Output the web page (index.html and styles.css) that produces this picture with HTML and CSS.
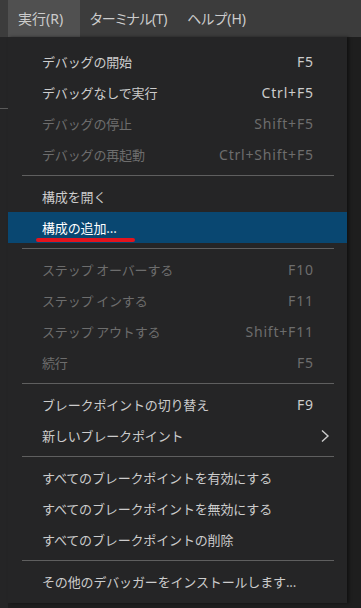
FILE: index.html
```html
<!DOCTYPE html>
<html lang="ja">
<head>
<meta charset="utf-8">
<link rel="stylesheet" href="styles.css">
</head>
<body>
<div class="app">
  <div class="menubar">
    <div class="mb-item active">実行(R)</div>
    <div class="mb-item tight">ターミナル(T)</div>
    <div class="mb-item">ヘルプ(H)</div>
  </div>
  <div class="main">
    <div class="gutter"><div class="gutter-line"></div></div>
    <div class="menu">
      <div class="item"><span class="label">デバッグの開始</span><span class="key">F5</span></div>
      <div class="item"><span class="label">デバッグなしで実行</span><span class="key">Ctrl+F5</span></div>
      <div class="item disabled"><span class="label">デバッグの停止</span><span class="key">Shift+F5</span></div>
      <div class="item disabled"><span class="label">デバッグの再起動</span><span class="key">Ctrl+Shift+F5</span></div>
      <div class="sep"></div>
      <div class="item"><span class="label">構成を開く</span></div>
      <div class="item selected"><span class="label">構成の追加...</span><span class="mark"></span></div>
      <div class="sep"></div>
      <div class="item disabled"><span class="label">ステップ オーバーする</span><span class="key">F10</span></div>
      <div class="item disabled"><span class="label">ステップ インする</span><span class="key">F11</span></div>
      <div class="item disabled"><span class="label">ステップ アウトする</span><span class="key">Shift+F11</span></div>
      <div class="item disabled"><span class="label">続行</span><span class="key">F5</span></div>
      <div class="sep"></div>
      <div class="item"><span class="label">ブレークポイントの切り替え</span><span class="key">F9</span></div>
      <div class="item"><span class="label">新しいブレークポイント</span><svg class="chev" width="10" height="14" viewBox="0 0 10 14"><polyline points="2,1.5 8,7 2,12.5" fill="none" stroke="#cccccc" stroke-width="1.4"/></svg></div>
      <div class="sep"></div>
      <div class="item"><span class="label">すべてのブレークポイントを有効にする</span></div>
      <div class="item"><span class="label">すべてのブレークポイントを無効にする</span></div>
      <div class="item"><span class="label">すべてのブレークポイントの削除</span></div>
      <div class="sep"></div>
      <div class="item"><span class="label">その他のデバッガーをインストールします...</span></div>
    </div>
    <div class="right"></div>
  </div>
</div>
</body>
</html>
```
FILE: styles.css
```css
html, body {
  margin: 0;
  padding: 0;
  background: #1e1e1e;
}
.app {
  width: 361px;
  height: 608px;
  overflow: hidden;
  display: flex;
  flex-direction: column;
  font-family: "Noto Sans", "Noto Sans CJK JP", sans-serif;
  color: #cccccc;
}
.menubar {
  height: 37px;
  background: #3c3c3c;
  display: flex;
  padding-left: 8px;
  flex-shrink: 0;
}
.mb-item {
  padding: 1px 10px 0;
  line-height: 36px;
  font-size: 14px;
  font-feature-settings: "palt";
  color: #cccccc;
}
.mb-item.active {
  background: #505050;
  width: 52px;
}
.mb-item.tight {
  letter-spacing: -0.4px;
}
.main {
  display: flex;
  align-items: flex-start;
  flex: 1;
}
.gutter {
  width: 8px;
  height: 571px;
  background: #252526;
  flex-shrink: 0;
}
.gutter-line {
  margin-top: 71px;
  height: 1px;
  background: #5a5a5a;
}
.menu {
  width: 339px;
  flex-shrink: 0;
  background: #252526;
  padding: 9px 0 6px;
  box-shadow: 2px 0 3px rgba(0, 0, 0, 0.45);
  position: relative;
  z-index: 1;
}
.item {
  position: relative;
  height: 31px;
  display: flex;
  align-items: center;
  justify-content: space-between;
  padding: 0 34px;
  font-size: 13px;
  color: #cccccc;
}
.item.disabled {
  color: #6d6d6d;
}
.item.selected {
  background: #094771;
  color: #ffffff;
}
.label {
  font-family: "Noto Sans CJK JP", sans-serif;
  white-space: nowrap;
  letter-spacing: -0.15px;
}
.key {
  font-family: "Noto Sans", "Noto Sans CJK JP", sans-serif;
  font-size: 14px;
  letter-spacing: 0.8px;
  margin-right: -0.8px;
}
.chev {
  margin-right: -17px;
}
.mark {
  position: absolute;
  left: 28px;
  top: 26px;
  width: 99px;
  height: 4px;
  border-radius: 2px;
  background: #e3141d;
}
.sep {
  height: 11px;
  display: flex;
  flex-direction: column;
  padding: 5px 13px 0 14px;
  box-sizing: border-box;
}
.sep::before {
  content: "";
  height: 1px;
  background: #5f5f5f;
}
.right {
  flex: 1;
  height: 571px;
  background: #1e1e1e;
}
```
